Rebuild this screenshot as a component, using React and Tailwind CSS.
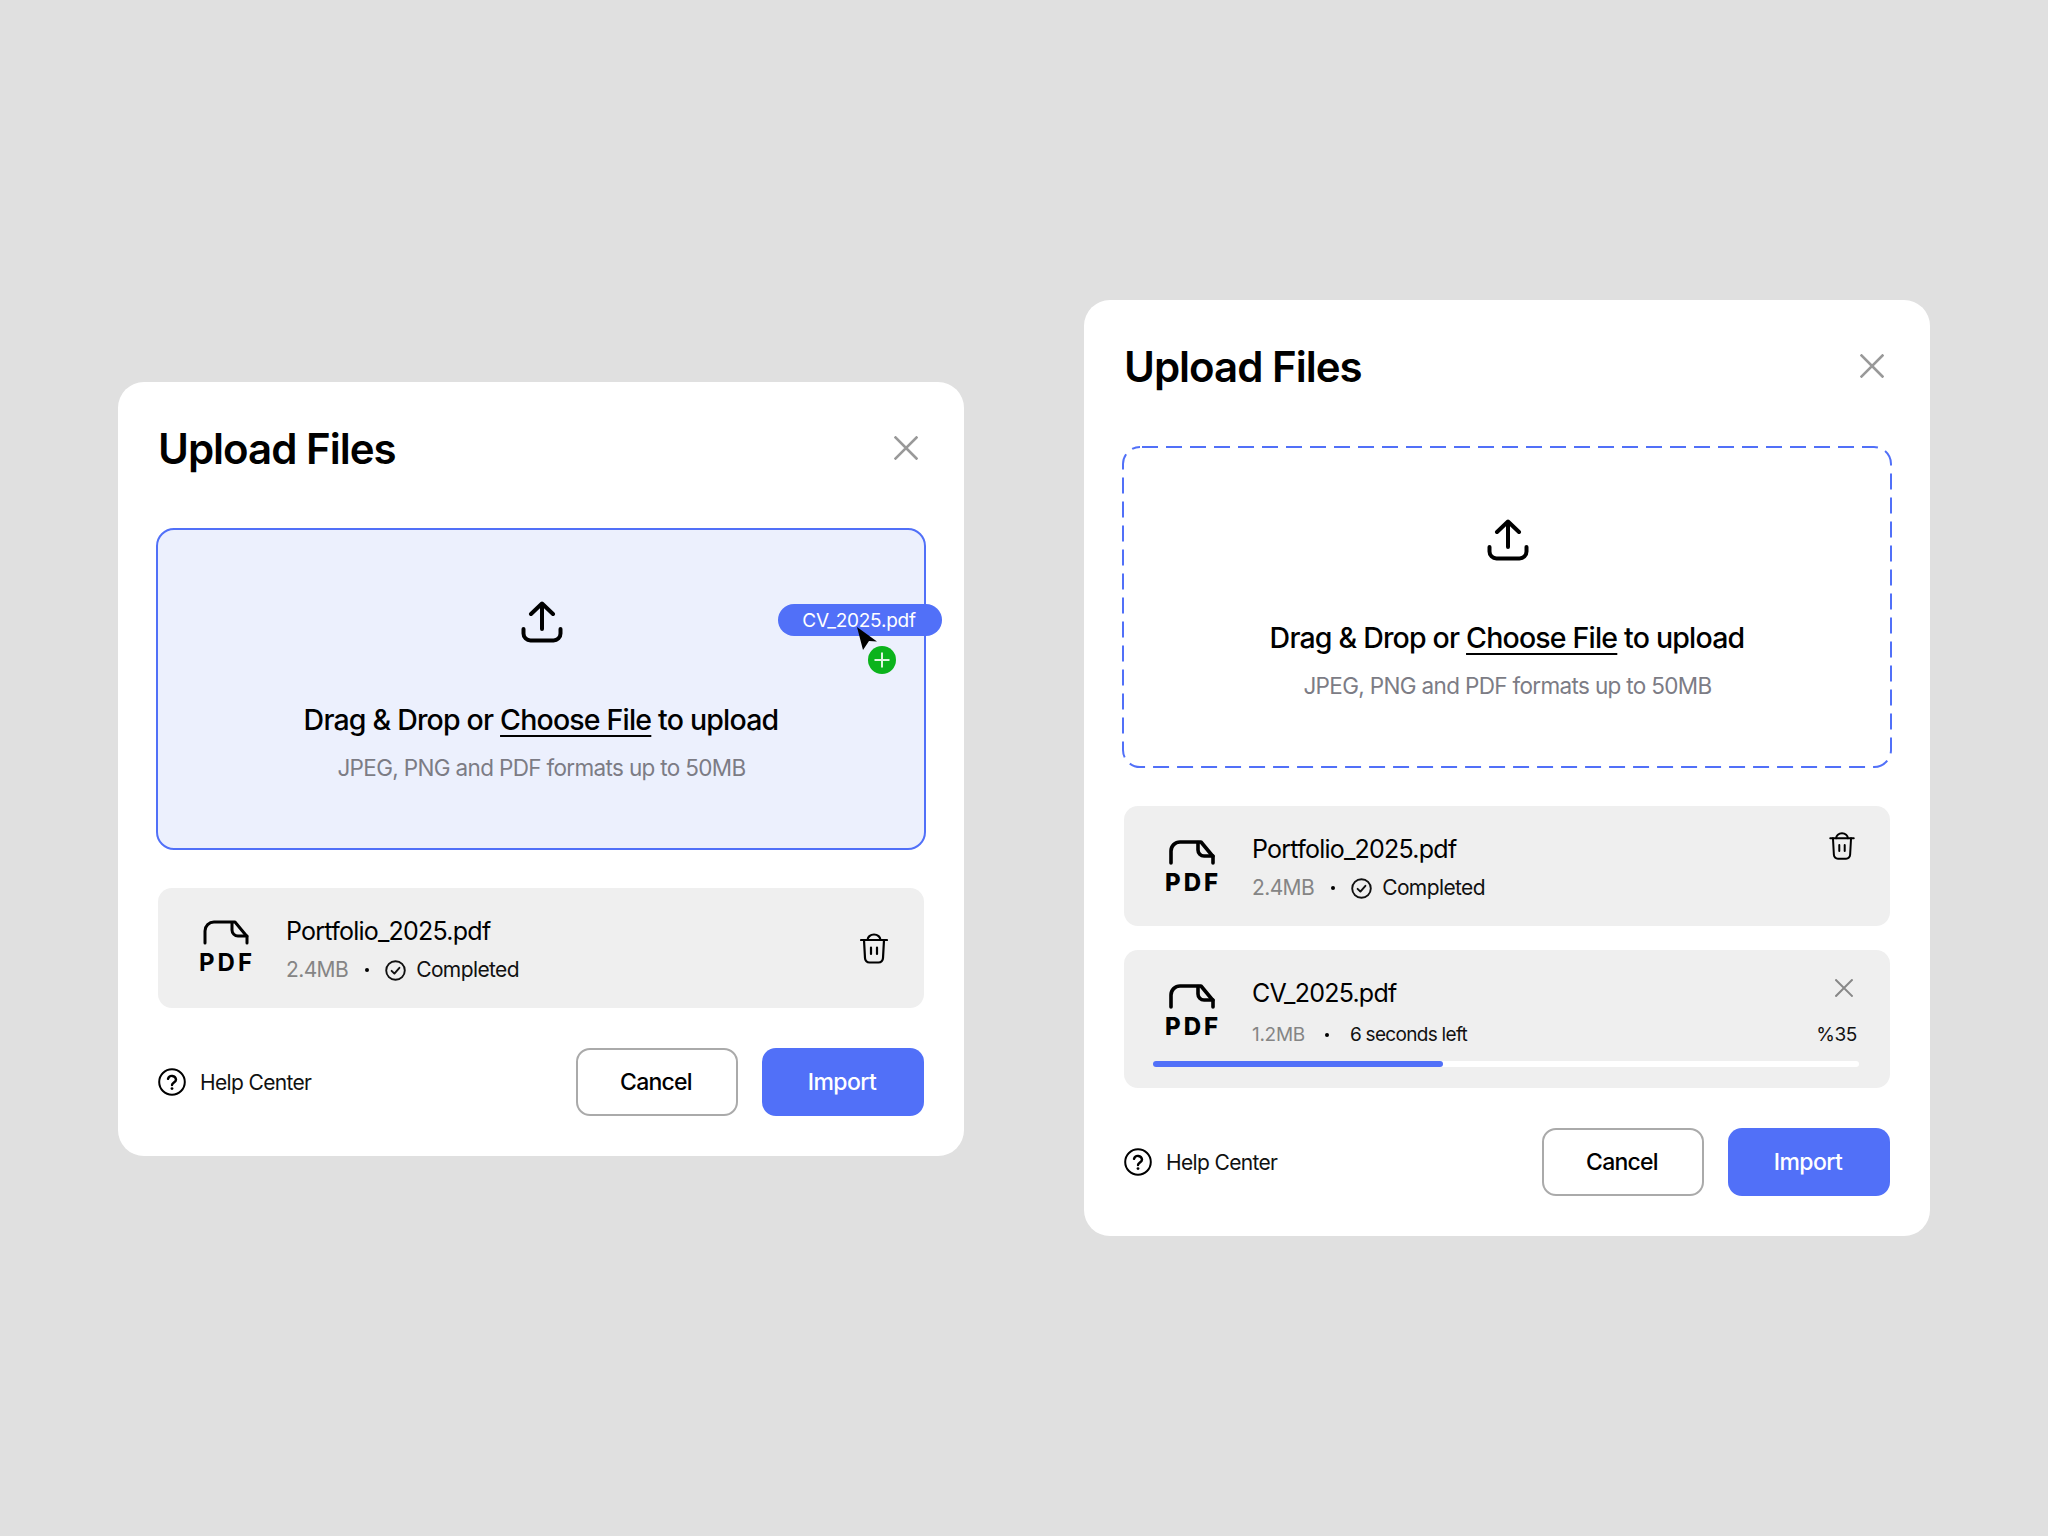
const BLUE = "#5170f8";

function CloseIcon({ size, color, width = 2.6 }) {
  return (
    <svg width={size} height={size} viewBox="0 0 24 24" fill="none" stroke={color} strokeWidth={width} strokeLinecap="square">
      <path d="M1.5 1.5L22.5 22.5M22.5 1.5L1.5 22.5" />
    </svg>
  );
}

function UploadIcon() {
  return (
    <svg width="42" height="42" viewBox="0 0 42 42" fill="none" stroke="#000" strokeWidth="4" strokeLinecap="round" strokeLinejoin="round">
      <path d="M21 28V3M10 13L21 2.5L32 13" />
      <path d="M2.5 28V32.5a7 7 0 0 0 7 7h23a7 7 0 0 0 7-7V28" />
    </svg>
  );
}

function PdfIcon({ bold }) {
  return (
    <div className="flex w-[52px] shrink-0 flex-col items-center">
      <svg width="46" height="25" viewBox="0 0 46 25" fill="none" stroke="#000" strokeWidth={bold ? 3.6 : 3} strokeLinecap="round" strokeLinejoin="round">
        <path d="M2 23V11a9 9 0 0 1 9-9h21L44 16.5V23" />
        <path d="M29 2.5V10a6 6 0 0 0 6 6H44" />
      </svg>
      <span className={`mt-[5px] block h-[26px] pl-[2px] text-[24px] leading-[26px] tracking-[3px] text-black ${bold ? "font-extrabold" : "font-bold"}`}>PDF</span>
    </div>
  );
}

function TrashIcon({ small }) {
  const s = small ? 26 : 28;
  return (
    <svg width={s} height={small ? 28 : 31} viewBox="0 0 28 31" fill="none" stroke="#000" strokeWidth="2.2" strokeLinecap="round" strokeLinejoin="round">
      <path d="M1 7H27" />
      <path d="M7.5 7a6.5 5.5 0 0 1 13 0" />
      <path d="M4 7L5 25a4.5 4.5 0 0 0 4.5 4.5h9A4.5 4.5 0 0 0 23 25L24 7" />
      <path d="M11 14.5V21M17 14.5V21" />
    </svg>
  );
}

function CheckIcon() {
  return (
    <svg width="21" height="21" viewBox="0 0 21 21" fill="none" stroke="#111" strokeWidth="1.9" strokeLinecap="round" strokeLinejoin="round">
      <circle cx="10.5" cy="10.5" r="9.3" />
      <path d="M6.6 10.8L9.4 13.6L14.4 7.8" />
    </svg>
  );
}

function HelpIcon() {
  return (
    <svg width="28" height="28" viewBox="0 0 28 28" fill="none" stroke="#000" strokeWidth="2" strokeLinecap="round" strokeLinejoin="round">
      <circle cx="14" cy="14" r="12.8" />
      <path d="M10 10.8a4.1 4.1 0 0 1 8 .9c0 2.7-4 3-4 5.4" strokeWidth="2.4" />
      <circle cx="14" cy="20.6" r="1.4" fill="#000" stroke="none" />
    </svg>
  );
}

function DragGhost() {
  return (
    <div className="absolute left-[620px] top-[74px] h-[72px] w-[164px]">
      <div className="flex h-[32px] w-[164px] items-center justify-center rounded-full bg-[#5170f8] pt-[2px] pr-[2px] text-[19px] leading-[30px] tracking-[-0.25px] text-white">CV_2025.pdf</div>
      <svg className="absolute left-[78px] top-[22px]" width="24" height="26" viewBox="0 0 24 26">
        <path d="M1 1L21 15.5L13 15L7 24Z" fill="#000" />
      </svg>
      <svg className="absolute left-[90px] top-[42px]" width="28" height="28" viewBox="0 0 28 28">
        <circle cx="14" cy="14" r="14" fill="#0bb31c" />
        <path d="M14 6.5V21.5M6.5 14H21.5" stroke="#dff5e0" strokeWidth="2" />
      </svg>
    </div>
  );
}

function Dropzone({ active }) {
  return (
    <div className={`relative -mx-[2px] flex h-[322px] flex-col items-center rounded-[18px] pt-[72px] ${active ? "border-2 border-[#5170f8] bg-[#ecf0fd]" : "bg-white"}`}>
      {!active && (
        <svg className="absolute left-0 top-0" width="770" height="322" fill="none">
          <rect x="1" y="1" width="768" height="320" rx="17" stroke={BLUE} strokeWidth="2" strokeDasharray="16 8" strokeDashoffset="-2" />
        </svg>
      )}
      <div className={`ml-[2px] ${active ? "-mt-[1px]" : "mt-[1px]"}`}><UploadIcon /></div>
      <p className="mt-[57px] text-[28.5px] font-medium leading-[40px] tracking-[-0.8px] text-black">
        Drag &amp; Drop or <span className="underline decoration-2 underline-offset-[5px]">Choose File</span> to upload
      </p>
      <p className="mt-[11px] pl-[1px] text-[22.5px] leading-[34px] tracking-[-0.66px] text-[#7c7c85]">JPEG, PNG and PDF formats up to 50MB</p>
      {active && <DragGhost />}
    </div>
  );
}

function CompletedRow({ centered }) {
  return (
    <div className={`flex h-[120px] rounded-[14px] bg-[#efefef] pl-[42px] ${centered ? "items-center pr-[36px]" : "items-start pr-[35px]"}`}>
      <div className={centered ? "" : "mt-[34px]"}><PdfIcon bold={!centered} /></div>
      <div className={`ml-[34px] flex-1 ${centered ? "mt-[5px]" : "mt-[26px]"}`}>
        <p className="text-[25px] leading-[34px] tracking-[-0.76px] text-black">Portfolio_2025.pdf</p>
        <div className="mt-[5px] flex h-[34px] items-center text-[21px] tracking-[-0.6px]">
          <span className="text-[#858585]">2.4MB</span>
          <span className="ml-[17px] h-[4px] w-[4px] rounded-full bg-black" />
          <span className="ml-[16px]"><CheckIcon /></span>
          <span className="ml-[10px] text-[#111]">Completed</span>
        </div>
      </div>
      <div className={centered ? "" : "mt-[26px]"}><TrashIcon small={!centered} /></div>
    </div>
  );
}

function UploadingRow() {
  return (
    <div className="mt-[24px] h-[138px] rounded-[14px] bg-[#efefef] pl-[29px] pr-[31px]">
      <div className="flex h-[111px] items-start pl-[13px]">
        <div className="mt-[34px]"><PdfIcon bold /></div>
        <div className="ml-[34px] mt-[26px] flex-1">
          <p className="text-[25px] leading-[34px] tracking-[-0.76px] text-black">CV_2025.pdf</p>
          <div className="mt-[9px] flex h-[32px] items-center text-[19px]">
            <span className="tracking-[-0.3px] text-[#858585]">1.2MB</span>
            <span className="ml-[20px] h-[4px] w-[4px] rounded-full bg-black" />
            <span className="ml-[21px] tracking-[-0.7px] text-[#111]">6 seconds left</span>
          </div>
        </div>
        <div className="flex flex-col items-end">
          <div className="mr-[6px] mt-[29px]"><CloseIcon size={18} color="#888" width={2.8} /></div>
          <span className="mr-[2px] mt-[22px] text-[19px] leading-[32px] tracking-[-0.4px] text-[#111]">%35</span>
        </div>
      </div>
      <div className="h-[6px] w-[706px] rounded-full bg-white">
        <div className="h-[6px] w-[290px] rounded-full bg-[#5170f8]" />
      </div>
    </div>
  );
}

function Footer() {
  return (
    <div className="mt-[40px] flex items-center justify-between">
      <div className="flex items-center gap-[14px]">
        <HelpIcon />
        <span className="pt-[1px] text-[21px] tracking-[-0.65px] text-[#111]">Help Center</span>
      </div>
      <div className="flex gap-[24px]">
        <button className="h-[68px] w-[162px] rounded-[14px] border-2 border-[#aaaaaa] bg-white pr-[2px] text-[23px] font-medium tracking-[-0.75px] text-black">Cancel</button>
        <button className="h-[68px] w-[162px] rounded-[14px] bg-[#5170f8] pr-[2px] text-[23px] font-medium tracking-[-0.6px] text-white">Import</button>
      </div>
    </div>
  );
}

function Card({ active, children, className }) {
  return (
    <section className={`w-[846px] rounded-[26px] bg-white p-[40px] ${className}`}>
      <header className="mb-[52px] flex h-[54px] items-center justify-between">
        <h1 className="text-[42px] font-semibold leading-[54px] tracking-[-1px] text-black">Upload Files</h1>
        <div className="mb-[2px] mr-[6px]"><CloseIcon size={24} color="#999" /></div>
      </header>
      <Dropzone active={active} />
      <div className="mt-[38px]">{children}</div>
      <Footer />
    </section>
  );
}

export default function App() {
  return (
    <main className="flex h-[1536px] w-[2048px] items-start justify-center gap-[120px] bg-[#e0e0e0] pt-[300px] font-['Inter',sans-serif]">
      <Card active className="mt-[82px]">
        <CompletedRow centered />
      </Card>
      <Card>
        <CompletedRow />
        <UploadingRow />
      </Card>
    </main>
  );
}
